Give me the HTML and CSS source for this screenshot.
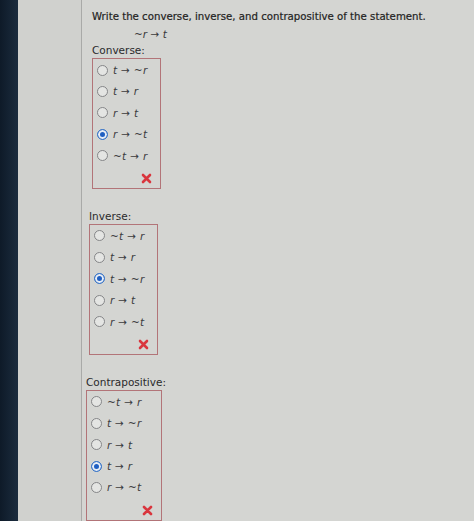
FILE: index.html
```html
<!DOCTYPE html>
<html>
<head>
<meta charset="utf-8">
<link rel="stylesheet" href="styles.css">
</head>
<body>
<div class="screen">
  <div class="edge"></div>
  <div class="side"></div>
  <div class="main">
    <div class="title">Write the converse, inverse, and contrapositive of the statement.</div>
    <div class="stmt">~<i>r</i> → <i>t</i></div>

    <div class="section s1">
      <div class="label">Converse:</div>
      <div class="box">
        <div class="opt"><span class="radio"></span><span class="expr"><i>t</i> → ~<i>r</i></span></div>
        <div class="opt"><span class="radio"></span><span class="expr"><i>t</i> → <i>r</i></span></div>
        <div class="opt"><span class="radio"></span><span class="expr"><i>r</i> → <i>t</i></span></div>
        <div class="opt"><span class="radio on"></span><span class="expr"><i>r</i> → ~<i>t</i></span></div>
        <div class="opt"><span class="radio"></span><span class="expr">~<i>t</i> → <i>r</i></span></div>
        <div class="mark"><svg width="11" height="11" viewBox="0 0 11 11"><path d="M2 2 L9 9 M9 2 L2 9" stroke="#d9363e" stroke-width="2.6" stroke-linecap="round"/></svg></div>
      </div>
    </div>

    <div class="section s2">
      <div class="label">Inverse:</div>
      <div class="box">
        <div class="opt"><span class="radio"></span><span class="expr">~<i>t</i> → <i>r</i></span></div>
        <div class="opt"><span class="radio"></span><span class="expr"><i>t</i> → <i>r</i></span></div>
        <div class="opt"><span class="radio on"></span><span class="expr"><i>t</i> → ~<i>r</i></span></div>
        <div class="opt"><span class="radio"></span><span class="expr"><i>r</i> → <i>t</i></span></div>
        <div class="opt"><span class="radio"></span><span class="expr"><i>r</i> → ~<i>t</i></span></div>
        <div class="mark"><svg width="11" height="11" viewBox="0 0 11 11"><path d="M2 2 L9 9 M9 2 L2 9" stroke="#d9363e" stroke-width="2.6" stroke-linecap="round"/></svg></div>
      </div>
    </div>

    <div class="section s3">
      <div class="label">Contrapositive:</div>
      <div class="box">
        <div class="opt"><span class="radio"></span><span class="expr">~<i>t</i> → <i>r</i></span></div>
        <div class="opt"><span class="radio"></span><span class="expr"><i>t</i> → ~<i>r</i></span></div>
        <div class="opt"><span class="radio"></span><span class="expr"><i>r</i> → <i>t</i></span></div>
        <div class="opt"><span class="radio on"></span><span class="expr"><i>t</i> → <i>r</i></span></div>
        <div class="opt"><span class="radio"></span><span class="expr"><i>r</i> → ~<i>t</i></span></div>
        <div class="mark"><svg width="11" height="11" viewBox="0 0 11 11"><path d="M2 2 L9 9 M9 2 L2 9" stroke="#d9363e" stroke-width="2.6" stroke-linecap="round"/></svg></div>
      </div>
    </div>
  </div>
</div>
</body>
</html>
```

FILE: styles.css
```css
html, body {
  margin: 0;
  padding: 0;
  width: 474px;
  height: 521px;
  overflow: hidden;
  background: #d3d4d1;
}
.screen {
  display: flex;
  height: 521px;
  font-family: "DejaVu Sans", Verdana, sans-serif;
  color: #2a2a2c;
}
.edge {
  width: 18px;
  flex: none;
  background: linear-gradient(to right, #0e1a28, #1b2c3e);
}
.side {
  width: 63px;
  flex: none;
  background: #d0d1ce;
  border-right: 1px solid #a9aaa8;
}
.main {
  flex: 1;
  padding: 10px 0 0 10px;
  background: #d4d5d2;
}
.title {
  font-size: 10.2px;
  line-height: 14px;
  color: #1f1f22;
  white-space: nowrap;
  -webkit-text-stroke: 0.2px #1f1f22;
}
.stmt {
  font-size: 10.5px;
  line-height: 12px;
  margin: 4px 0 0 42px;
  color: #3a3a3c;
}
.section {
  margin-top: 3px;
}
.s2 { margin-top: 20px; margin-left: -3px; }
.s3 { margin-top: 20px; margin-left: -6px; }
.label {
  font-size: 10.5px;
  line-height: 14px;
  color: #2a2a2c;
}
.box {
  margin-top: 1px;
  width: 63px;
  border: 1px solid #b27478;
  padding: 5px 0 4px 4px;
  display: flex;
  flex-direction: column;
  gap: 9.4px;
}
.s3 .box { width: 70px; }
.opt {
  display: flex;
  align-items: center;
  gap: 5px;
  height: 12px;
}
.radio {
  width: 9px;
  height: 9px;
  border: 1px solid #858688;
  border-radius: 50%;
  background: #e4e5e3;
  flex: none;
}
.radio.on {
  border-color: #3d78c8;
  background: #1f5fc2;
  box-shadow: inset 0 0 0 2px #e8eef6;
}
.expr {
  font-size: 10.5px;
  color: #3b3b3e;
  white-space: nowrap;
  letter-spacing: 0.3px;
}
.mark {
  display: flex;
  justify-content: flex-end;
  padding-right: 8px;
  margin-top: 2px;
}
```
